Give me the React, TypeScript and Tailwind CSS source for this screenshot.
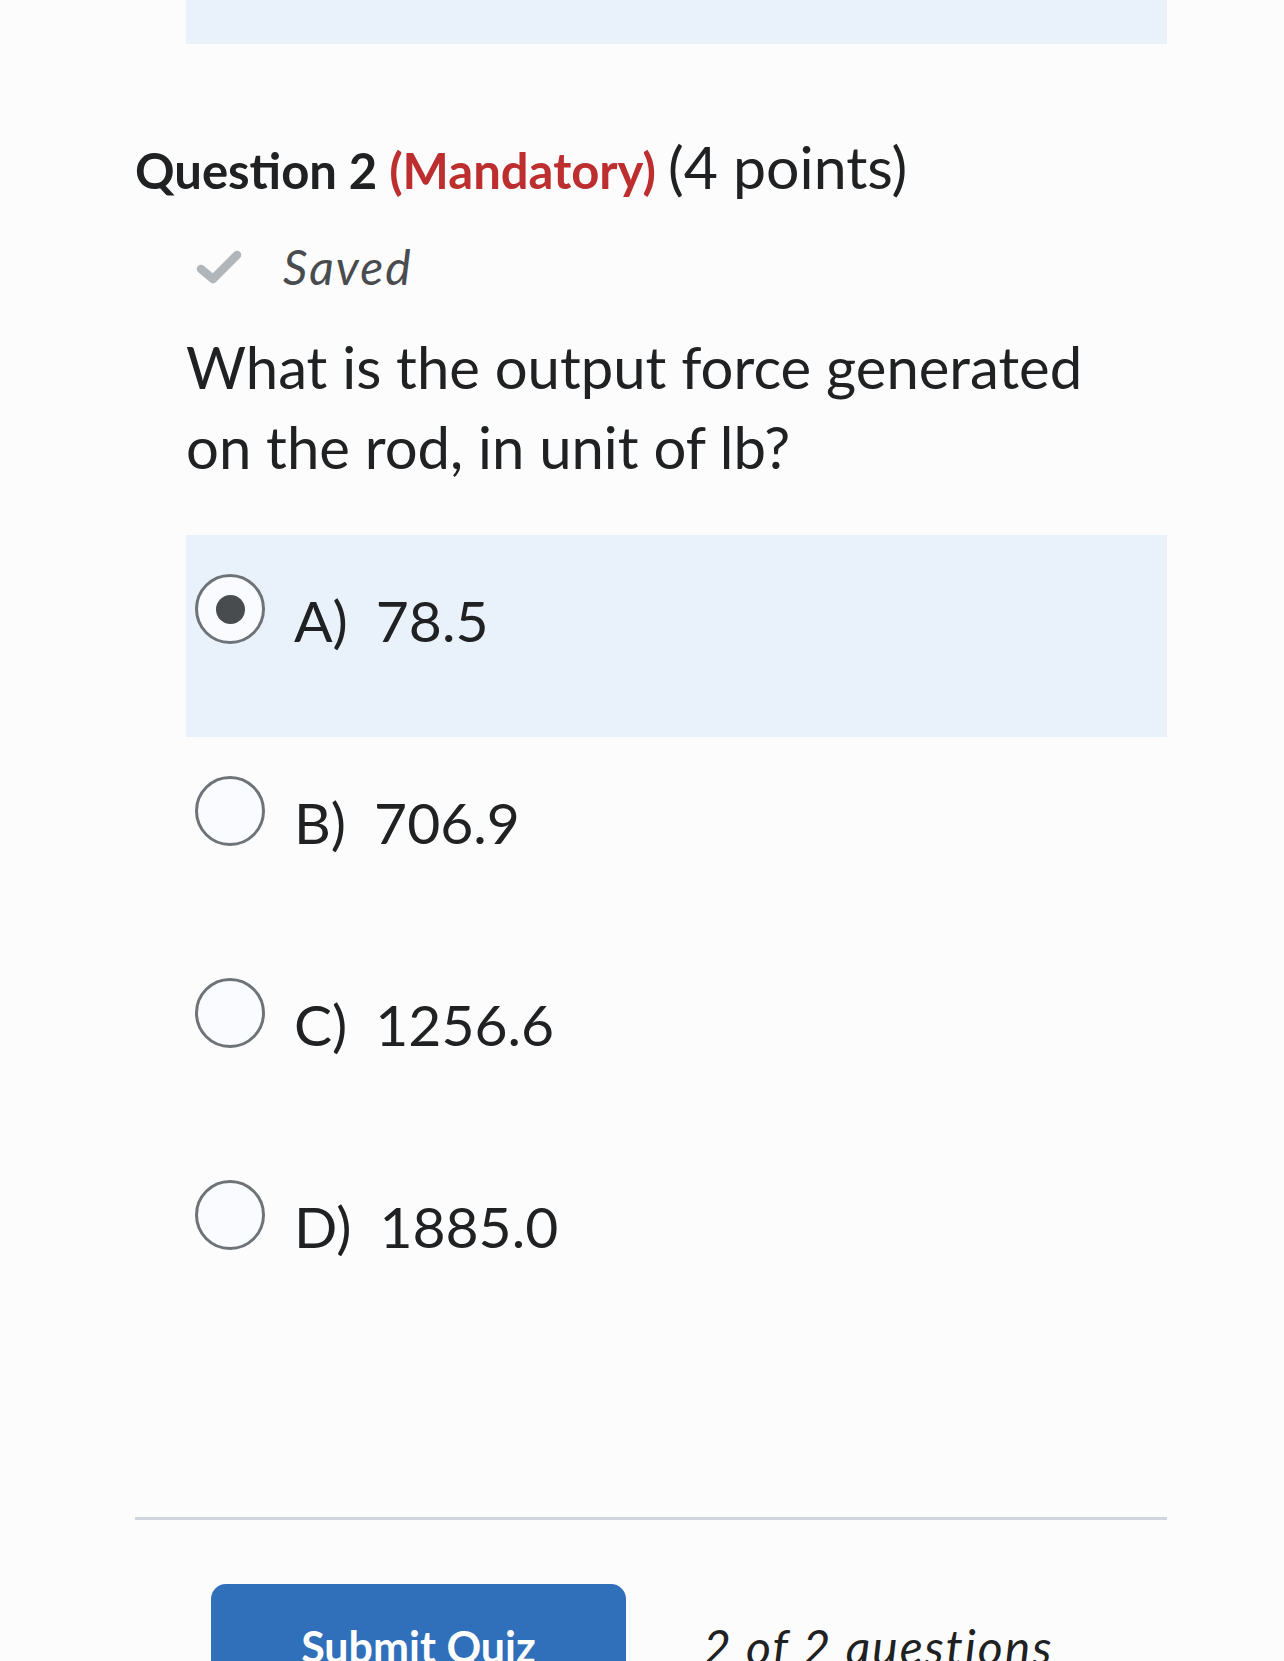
import React from "react";

const options = [
  { letter: "A)", value: "78.5", selected: true },
  { letter: "B)", value: "706.9", selected: false },
  { letter: "C)", value: "1256.6", selected: false },
  { letter: "D)", value: "1885.0", selected: false },
];

export default function App() {
  return (
    <div className="min-h-screen bg-[#fcfcfd] font-['Lato',sans-serif] text-[#202122]">
      <div className="ml-[135px] w-[1032px]">
        <div className="ml-[51px] h-[44px] bg-[#e9f1fb]" />

        <div className="mt-[88px] flex items-baseline">
          <span className="text-[49px] font-bold leading-[1.2]">
            Question 2 <span className="text-[#bd2f2f]">(Mandatory)</span>
          </span>
          <span className="ml-[12px] text-[59px] leading-[1.2]">(4 points)</span>
        </div>

        <div className="mt-[35px] flex items-center">
          <svg width="52" height="42" viewBox="0 0 52 42" className="ml-[58px]">
            <polyline
              points="8,23 20,33 44,9"
              fill="none"
              stroke="#b1b6bb"
              strokeWidth="8.5"
              strokeLinecap="round"
              strokeLinejoin="round"
            />
          </svg>
          <span className="ml-[38px] text-[48px] italic leading-[1.2] tracking-[2px] text-[#494c4e]">Saved</span>
        </div>

        <div className="ml-[51px] mt-[32px] text-[58px] leading-[80px]">
          What is the output force generated
          <br />
          on the rod, in unit of lb?
        </div>

        <div className="ml-[51px] mt-[48px] flex flex-col">
          {options.map((o) => (
            <div
              key={o.letter}
              className={
                o.selected
                  ? "flex h-[202px] items-start bg-[#e9f1fb]"
                  : "flex h-[202px] items-start"
              }
            >
              <div className="ml-[9px] mt-[39px] flex h-[70px] w-[70px] shrink-0 items-center justify-center rounded-full border-[3px] border-[#6e7377] bg-[#f9fbfe]">
                {o.selected && <div className="h-[29px] w-[29px] rounded-full bg-[#494c4e]" />}
              </div>
              <div className="ml-[29px] mt-[51px] flex text-[57px] leading-[1.2]">
                <span>{o.letter}</span>
                <span className="ml-[28px]">{o.value}</span>
              </div>
            </div>
          ))}
        </div>

        <div className="mt-[174px] h-[3px] bg-[#d0d6de]" />

        <div className="mt-[64px] flex items-center">
          <button className="ml-[76px] flex h-[124px] w-[415px] items-center justify-center rounded-[15px] bg-[#306fb9] text-[43px] font-bold leading-[1.2] text-white">
            Submit Quiz
          </button>
          <span className="ml-[77px] text-[48px] italic leading-[1.2] tracking-[2px] text-[#202122]">2 of 2 questions</span>
        </div>
      </div>
    </div>
  );
}
